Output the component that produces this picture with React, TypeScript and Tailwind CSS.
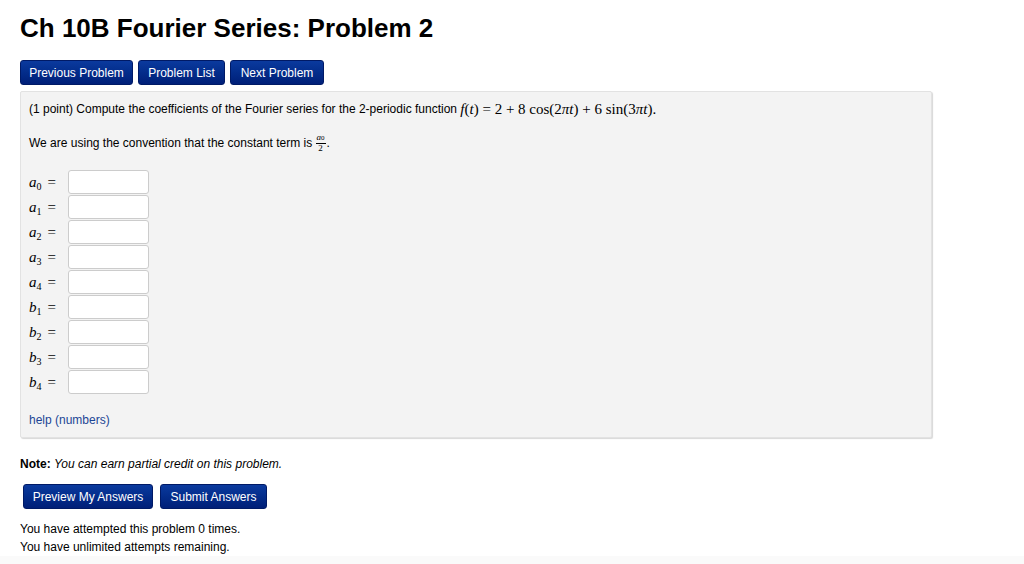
import React from 'react';

const sans = { fontFamily: '"Liberation Sans", Arial, sans-serif' };

function NavButton({ label, className = '' }: { label: string; className?: string }) {
  return (
    <button
      className={`h-[25px] whitespace-nowrap rounded-[3px] border border-[#001a66] bg-gradient-to-b from-[#0b3a9e] to-[#001f78] px-0 text-[12px] leading-none text-white ${className}`}
    >
      {label}
    </button>
  );
}

// italic serif math, MathJax look
function M({ children }: { children: React.ReactNode }) {
  return <span className="font-['Liberation_Serif',serif] text-[15px]">{children}</span>;
}

function Sym({ v, sub }: { v: string; sub: string }) {
  return (
    <span className="font-['Liberation_Serif',serif] text-[15px]">
      <i>{v}</i>
      <span className="relative top-[3px] text-[10px]">{sub}</span>
    </span>
  );
}

const rows: [string, string][] = [
  ['a', '0'],
  ['a', '1'],
  ['a', '2'],
  ['a', '3'],
  ['a', '4'],
  ['b', '1'],
  ['b', '2'],
  ['b', '3'],
  ['b', '4'],
];

export default function App() {
  return (
    <div className="flex min-h-[564px] w-full flex-col bg-white text-[12px] text-black" style={sans}>
      <div className="flex-1 pl-[20px]">
        {/* Title */}
        <h1 className="pt-[13px] text-[26px] font-bold leading-[30px]">
          Ch 10B Fourier Series: Problem 2
        </h1>

        {/* Nav */}
        <div className="mt-[17px] flex gap-[5px]">
          <NavButton label="Previous Problem" className="w-[113px]" />
          <NavButton label="Problem List" className="w-[87px]" />
          <NavButton label="Next Problem" className="w-[94px]" />
        </div>

        {/* Problem box */}
        <div className="mt-[6px] w-[912px] rounded-[2px] border border-[#e2e2e2] bg-[#f3f3f3] px-[8px] pt-[8px] pb-[8px] shadow-[1px_1px_1px_#d8d8d8]">
          <p className="flex h-[18px] items-center">
            (1 point) Compute the coefficients of the Fourier series for the 2-periodic function&nbsp;
            <M>
              <i>f</i>(<i>t</i>) = 2 + 8 cos(2<i>πt</i>) + 6 sin(3<i>πt</i>).
            </M>
          </p>

          <p className="mt-[15px] flex h-[20px] items-center">
            We are using the convention that the constant term is&nbsp;
            <span className="inline-flex flex-col items-center font-['Liberation_Serif',serif] text-[9px] leading-[9px]">
              <span className="border-b border-black px-[1px]">
                <i>a</i>
                <span className="text-[7px]">0</span>
              </span>
              <span>2</span>
            </span>
            <span className="ml-[1px]">.</span>
          </p>

          {/* Answer rows */}
          <div className="mt-[17px] flex flex-col gap-[1px]">
            {rows.map(([v, s]) => (
              <div key={v + s} className="flex h-[24px] items-center">
                <span className="w-[39px]">
                  <Sym v={v} sub={s} />
                  <span className="ml-[6px] font-['Liberation_Serif',serif] text-[15px]">=</span>
                </span>
                <input
                  type="text"
                  className="h-[24px] w-[81px] rounded-[3px] border border-[#cccccc] bg-white"
                />
              </div>
            ))}
          </div>

          <a className="mt-[17px] block text-[12px] text-[#1c4595]">help (numbers)</a>
        </div>

        {/* Note */}
        <p className="mt-[17px]">
          <b>Note:</b> <i>You can earn partial credit on this problem.</i>
        </p>

        <div className="mt-[11px] ml-[3px] flex gap-[7px]">
          <NavButton label="Preview My Answers" className="w-[130px]" />
          <NavButton label="Submit Answers" className="w-[107px]" />
        </div>

        <div className="mt-[11px] text-[12px] leading-[18px]">
          <p>You have attempted this problem 0 times.</p>
          <p>You have unlimited attempts remaining.</p>
        </div>
      </div>
      <div className="h-[9px] bg-[#fafafa]" />
    </div>
  );
}
